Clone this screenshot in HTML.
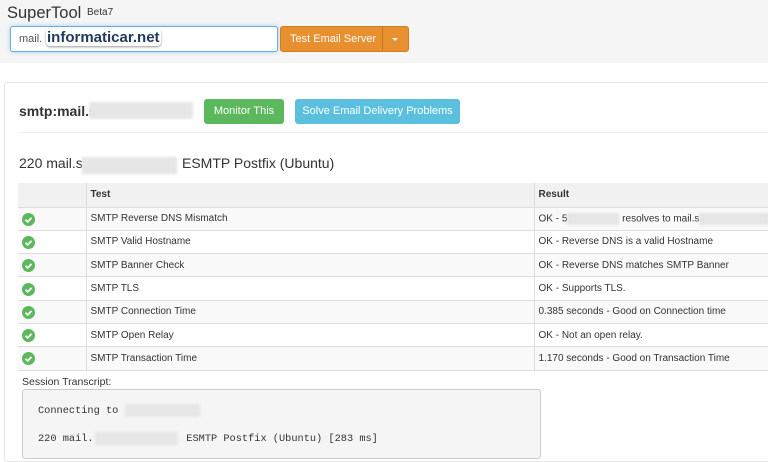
<!DOCTYPE html>
<html><head><style>
*{margin:0;padding:0;box-sizing:border-box}
body{width:768px;height:449px;overflow:hidden;background:#fff;font-family:"Liberation Sans",Arial,sans-serif;color:#333;position:relative}
.abs{position:absolute}
.top{left:0;top:0;width:768px;height:63px;background:#f5f5f5}
.blur{background:#e6e6e6;filter:blur(1px)}
table{border-collapse:collapse;position:absolute;left:18px;top:183px;width:760px;font-size:10px;white-space:nowrap}
td{height:23.3px;border-top:1px solid #ddd;padding:0;vertical-align:middle}
td.c1{width:68px;padding-left:4px}
td.c2{width:448px;border-left:1px solid #ddd;padding-left:4px}
td.c3{border-left:1px solid #ddd;padding-left:4px}
tr.h td{background:#f1f1f1;font-weight:bold;height:24px;border-top:none}
tr.s td{background:#f9f9f9}
.ok{display:inline-block;width:13px;height:13px;border-radius:50%;background:#5cb85c;position:relative;top:2px}
.ok svg{position:absolute;left:0;top:0}
</style></head><body>
<div class="abs top"></div>
<div class="abs" style="left:7px;top:4px;font-size:16.5px;color:#333">SuperTool</div>
<div class="abs" style="left:87px;top:7px;font-size:10px;color:#333">Beta7</div>
<div class="abs" style="left:10px;top:26px;width:268px;height:26px;border:1px solid #66afe9;border-radius:3px;background:#fff;box-shadow:0 0 4px rgba(102,175,233,.6)"></div>
<div class="abs" style="left:19px;top:33px;font-size:11px;color:#555">mail.</div>
<div class="abs" style="left:46px;top:29px;font-size:15px;font-weight:bold;color:#1f3a5a;background:#fff;border-radius:4px;box-shadow:0 1px 2px #999;padding:0 1px">informaticar.net</div>
<div class="abs" style="left:280px;top:26px;width:129px;height:26px;background:#e8902f;border:1px solid #d27f22;border-radius:3px"></div>
<div class="abs" style="left:290px;top:33px;font-size:11px;color:#fff">Test Email Server</div>
<div class="abs" style="left:382px;top:27px;width:1px;height:24px;background:#c9751d"></div>
<div class="abs" style="left:392px;top:38px;width:0;height:0;border-left:3px solid transparent;border-right:3px solid transparent;border-top:3px solid #fff"></div>
<div class="abs" style="left:4px;top:82px;width:780px;height:380px;border:1px solid #e6e6e6;border-radius:3px"></div>
<div class="abs" style="left:19px;top:103px;font-size:14px;font-weight:bold">smtp:mail.s</div>
<div class="abs blur" style="left:89px;top:102px;width:104px;height:17px"></div>
<div class="abs" style="left:204px;top:99px;width:80px;height:25px;background:#5cb85c;border-radius:3px;color:#fff;font-size:11px;text-align:center;line-height:25px">Monitor This</div>
<div class="abs" style="left:295px;top:99px;width:165px;height:25px;background:#5bc0de;border-radius:3px;color:#fff;font-size:11px;text-align:center;line-height:25px">Solve Email Delivery Problems</div>
<div class="abs" style="left:19px;top:132px;width:760px;height:1px;background:#eee"></div>
<div class="abs" style="left:19px;top:155px;font-size:14px">220 mail.s</div>
<div class="abs blur" style="left:82px;top:157px;width:95px;height:17px"></div>
<div class="abs" style="left:182px;top:155px;font-size:14px">ESMTP Postfix (Ubuntu)</div>
<table>
<tr class="h"><td class="c1"></td><td class="c2">Test</td><td class="c3">Result</td></tr>
<tr class="s"><td class="c1"><span class="ok"><svg width="13" height="13"><path d="M3.5 6.8l2.2 2.1 3.8-4" stroke="#fff" stroke-width="1.8" fill="none"/></svg></span></td><td class="c2">SMTP Reverse DNS Mismatch</td><td class="c3">OK - 5<span class="blur" style="display:inline-block;width:52px;height:12px;vertical-align:middle"></span> resolves to mail.s<span class="blur" style="display:inline-block;width:70px;height:12px;vertical-align:middle"></span></td></tr>
<tr><td class="c1"><span class="ok"><svg width="13" height="13"><path d="M3.5 6.8l2.2 2.1 3.8-4" stroke="#fff" stroke-width="1.8" fill="none"/></svg></span></td><td class="c2">SMTP Valid Hostname</td><td class="c3">OK - Reverse DNS is a valid Hostname</td></tr>
<tr class="s"><td class="c1"><span class="ok"><svg width="13" height="13"><path d="M3.5 6.8l2.2 2.1 3.8-4" stroke="#fff" stroke-width="1.8" fill="none"/></svg></span></td><td class="c2">SMTP Banner Check</td><td class="c3">OK - Reverse DNS matches SMTP Banner</td></tr>
<tr><td class="c1"><span class="ok"><svg width="13" height="13"><path d="M3.5 6.8l2.2 2.1 3.8-4" stroke="#fff" stroke-width="1.8" fill="none"/></svg></span></td><td class="c2">SMTP TLS</td><td class="c3">OK - Supports TLS.</td></tr>
<tr class="s"><td class="c1"><span class="ok"><svg width="13" height="13"><path d="M3.5 6.8l2.2 2.1 3.8-4" stroke="#fff" stroke-width="1.8" fill="none"/></svg></span></td><td class="c2">SMTP Connection Time</td><td class="c3">0.385 seconds - Good on Connection time</td></tr>
<tr><td class="c1"><span class="ok"><svg width="13" height="13"><path d="M3.5 6.8l2.2 2.1 3.8-4" stroke="#fff" stroke-width="1.8" fill="none"/></svg></span></td><td class="c2">SMTP Open Relay</td><td class="c3">OK - Not an open relay.</td></tr>
<tr class="s"><td class="c1"><span class="ok"><svg width="13" height="13"><path d="M3.5 6.8l2.2 2.1 3.8-4" stroke="#fff" stroke-width="1.8" fill="none"/></svg></span></td><td class="c2">SMTP Transaction Time</td><td class="c3">1.170 seconds - Good on Transaction Time</td></tr>
<tr><td colspan="3" style="height:1px;padding:0"></td></tr>
</table>
<div class="abs" style="left:22px;top:376px;font-size:10.5px">Session Transcript:</div>
<div class="abs" style="left:22px;top:389px;width:519px;height:70px;background:#f5f5f5;border:1px solid #ccc;border-radius:3px"></div>
<div class="abs" style="left:38px;top:405px;font-family:'Liberation Mono',monospace;font-size:10.3px;color:#333">Connecting to</div>
<div class="abs blur" style="left:125px;top:404px;width:75px;height:13px"></div>
<div class="abs" style="left:38px;top:433px;font-family:'Liberation Mono',monospace;font-size:10.3px;color:#333;white-space:pre">220 mail.               ESMTP Postfix (Ubuntu) [283 ms]</div>
<div class="abs blur" style="left:95px;top:432px;width:83px;height:13px"></div>
</body></html>
